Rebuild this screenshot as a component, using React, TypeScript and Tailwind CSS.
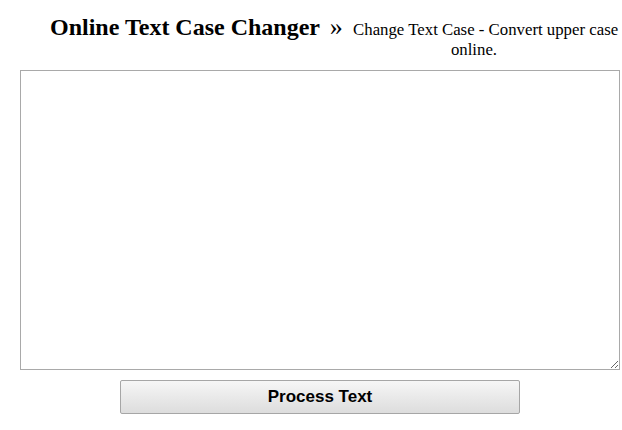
export default function App() {
  return (
    <div className="min-h-screen bg-white pl-[20px] pr-[2px] pt-[12px] font-['Liberation_Serif',serif] text-black">
      <div className="flex w-[600px] items-baseline">
        <h1 className="w-[302px] shrink-0 pl-[30px] text-[24px] leading-[30px] font-bold whitespace-nowrap">
          Online Text Case Changer
        </h1>
        <p className="flex-1 text-center text-[16.8px] leading-[20px] -mr-[6px]">
          <span className="mr-[6px] text-[26px] leading-[20px]">»</span> Change Text Case - Convert upper case online.
        </p>
      </div>
      <textarea className="mt-[10px] block h-[300px] w-[600px] resize border border-[#a9a9a9] bg-white p-[2px] outline-none" />
      <div className="flex w-[600px] justify-center pt-[10px]">
        <button className="h-[34px] w-[400px] rounded-[2px] border border-[#a6a6a6] bg-gradient-to-b from-[#f6f6f6] to-[#dddddd] font-['Liberation_Sans',sans-serif] text-[17px] font-bold">
          Process Text
        </button>
      </div>
    </div>
  );
}
